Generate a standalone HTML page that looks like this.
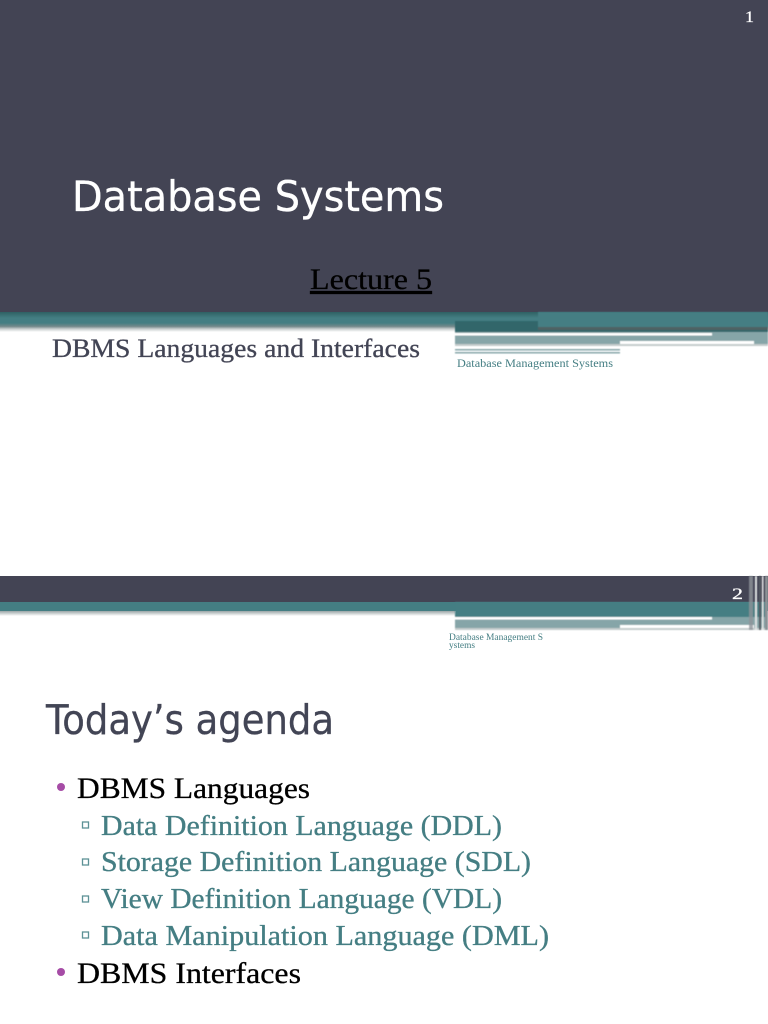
<!DOCTYPE html>
<html><head><meta charset="utf-8"><style>
html,body{margin:0;padding:0;background:#fff;width:768px;height:1024px;overflow:hidden}
svg{display:block}
.s{font-family:"Liberation Serif",serif}
.d{font-family:"DejaVu Sans",sans-serif}
</style></head><body>
<svg width="768" height="1024" viewBox="0 0 768 1024" xmlns="http://www.w3.org/2000/svg">
<defs>
<linearGradient id="g1" x1="0" y1="0" x2="0" y2="1"><stop offset="0" stop-color="#2f6063"/><stop offset=".3" stop-color="#447e83"/><stop offset=".55" stop-color="#447e83"/><stop offset=".72" stop-color="#74898b"/><stop offset=".85" stop-color="#c9cfcf"/><stop offset="1" stop-color="#ffffff"/></linearGradient>
<linearGradient id="g2" x1="0" y1="0" x2="0" y2="1"><stop offset="0" stop-color="#9aa5a6"/><stop offset="1" stop-color="#ffffff"/></linearGradient>
<filter id="b" x="-5%" y="-50%" width="110%" height="200%"><feGaussianBlur stdDeviation="0.6"/></filter>
<filter id="t" x="-5%" y="-20%" width="110%" height="140%"><feGaussianBlur stdDeviation="0.3"/></filter>
</defs>
<rect x="0" y="0" width="768" height="312" fill="#434454"/>
<rect x="0" y="312" width="768" height="20" fill="url(#g1)"/>
<g filter="url(#b)">
<rect x="455" y="321" width="313" height="11" fill="#33666a"/>
<rect x="538" y="327" width="230" height="3" fill="#4f6264"/>
<rect x="538" y="312" width="230" height="15" fill="#447e83"/>
<rect x="455" y="332" width="313" height="13" fill="#86a5a8"/>
<rect x="455" y="333" width="257" height="2.5" fill="#ffffff"/>
<rect x="620" y="341" width="134" height="3" fill="#ffffff"/>
<rect x="455" y="344" width="313" height="2" fill="#c4cccc"/>
<rect x="455" y="349" width="165" height="1.5" fill="#86a5a8"/>
<rect x="455" y="352" width="165" height="1.5" fill="#86a5a8"/>
</g>
<g filter="url(#t)">
<text class="d" x="72" y="211" font-size="42" fill="#ffffff" stroke="#ffffff" stroke-width=".3" textLength="372" lengthAdjust="spacingAndGlyphs">Database Systems</text>
<text class="s" x="310" y="289" font-size="30" fill="#000000" stroke="#000" stroke-width=".3" text-decoration="underline" textLength="122" lengthAdjust="spacingAndGlyphs">Lecture 5</text>
<text class="s" x="52" y="357" font-size="26" fill="#434454" stroke="#434454" stroke-width=".3" textLength="368" lengthAdjust="spacingAndGlyphs">DBMS Languages and Interfaces</text>
<text class="s" x="457" y="367" font-size="12" fill="#447e83" textLength="156" lengthAdjust="spacingAndGlyphs">Database Management Systems</text>
<text class="s" x="745" y="22" font-size="16" fill="#ffffff" stroke="#fff" stroke-width=".3" textLength="9" lengthAdjust="spacingAndGlyphs">1</text>
</g>

<rect x="0" y="576" width="768" height="26" fill="#434454"/>
<rect x="0" y="602" width="768" height="9" fill="#447e83"/>
<rect x="0" y="611" width="455" height="5" fill="url(#g2)"/>
<g filter="url(#b)">
<rect x="455" y="602" width="313" height="15" fill="#447e83"/>
<rect x="455" y="617" width="313" height="11" fill="#86a5a8"/>
<rect x="455" y="617" width="257" height="2.5" fill="#ffffff"/>
<rect x="620" y="625" width="134" height="3" fill="#ffffff"/>
<rect x="455" y="628" width="313" height="2" fill="#c4cccc"/>
<rect x="749" y="576" width="4" height="54" fill="#8f9499" opacity=".8"/>
<rect x="755" y="576" width="2" height="54" fill="#dfe2e2"/>
<rect x="759" y="576" width="2" height="54" fill="#555a62"/>
<rect x="762" y="576" width="1.5" height="54" fill="#e8e8e8"/>
<rect x="765" y="576" width="3" height="54" fill="#8c9296"/>
</g>
<g filter="url(#t)">
<text class="s" x="732" y="599" font-size="16" fill="#ffffff" stroke="#fff" stroke-width=".3" textLength="11" lengthAdjust="spacingAndGlyphs">2</text>
<text class="s" x="449" y="640" font-size="9.5" fill="#447e83" textLength="94" lengthAdjust="spacingAndGlyphs">Database Management S</text>
<text class="s" x="449" y="648" font-size="9.5" fill="#447e83" textLength="26" lengthAdjust="spacingAndGlyphs">ystems</text>

<text class="d" x="46" y="734" font-size="41" fill="#434454" stroke="#434454" stroke-width=".3" textLength="288" lengthAdjust="spacingAndGlyphs">Today’s agenda</text>

<text class="s" x="77" y="798" font-size="30" fill="#000000" stroke="#000" stroke-width=".3" textLength="233" lengthAdjust="spacingAndGlyphs">DBMS Languages</text>
<g class="s" font-size="28" fill="#447e83" stroke="#447e83" stroke-width=".3">
<text x="101" y="835" textLength="401" lengthAdjust="spacingAndGlyphs">Data Definition Language (DDL)</text>
<text x="101" y="871" textLength="430" lengthAdjust="spacingAndGlyphs">Storage Definition Language (SDL)</text>
<text x="101" y="908" textLength="401" lengthAdjust="spacingAndGlyphs">View Definition Language (VDL)</text>
<text x="101" y="945" textLength="448" lengthAdjust="spacingAndGlyphs">Data Manipulation Language (DML)</text>
</g>
<text class="s" x="77" y="983" font-size="30" fill="#000000" stroke="#000" stroke-width=".3" textLength="224" lengthAdjust="spacingAndGlyphs">DBMS Interfaces</text>
</g>
<circle cx="61" cy="787" r="4" fill="#a64ca6"/>
<g fill="none" stroke="#5d9296" stroke-width="1.3">
<rect x="82.5" y="822" width="6" height="6"/>
<rect x="82.5" y="859" width="6" height="6"/>
<rect x="82.5" y="896" width="6" height="6"/>
<rect x="82.5" y="932" width="6" height="6"/>
</g>
<circle cx="61" cy="972" r="4" fill="#a64ca6"/>
</svg>
</body></html>
